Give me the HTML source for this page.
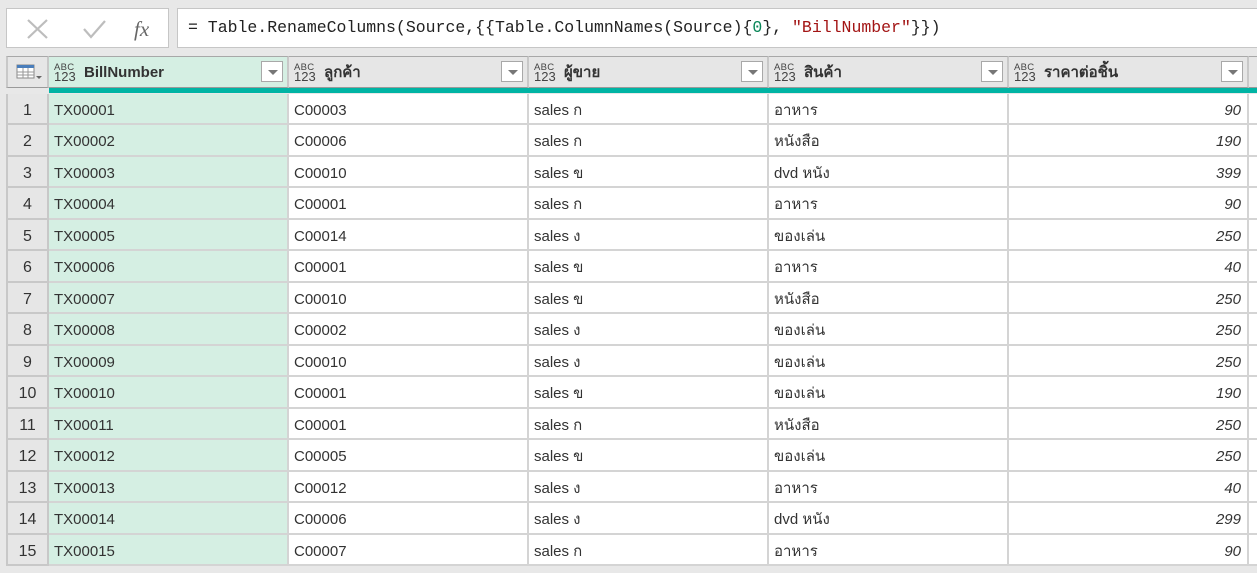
<!DOCTYPE html>
<html><head><meta charset="utf-8"><style>
*{margin:0;padding:0;box-sizing:border-box}
body{width:1257px;height:573px;background:#e8e8e8;position:relative;overflow:hidden;font-family:"Liberation Sans","Noto Sans CJK SC",sans-serif;color:#333}
.fbox{position:absolute;top:8px;height:40px;background:#fff;border:1px solid #c6c6c6}
.grid{position:absolute;left:6px;top:56px;width:1260px}
.hdr{position:absolute;top:0;height:32px;background:#e6e6e6;border-top:1px solid #a8a8a8;border-bottom:1px solid #9a9a9a;border-right:2px solid #c8c8c8}
.hdr.sel{background:#d5efe3}
.lbl{position:absolute;left:5px;top:6px;font-size:13px;line-height:10px;font-family:"Liberation Sans",sans-serif;color:#444}
.lbl b{display:block;font-weight:normal;font-size:9.5px;letter-spacing:.3px;line-height:9px}
.name{position:absolute;left:35px;top:6px;line-height:20px;height:20px;font-weight:bold;font-size:15px;color:#333;font-family:"Liberation Sans","Noto Sans CJK SC",sans-serif}
.dd{position:absolute;right:4px;top:4px;width:22px;height:21px;background:#fff;border:1px solid #a8a8a8}
.dd:after{content:"";position:absolute;left:6px;top:8px;border-left:5px solid transparent;border-right:5px solid transparent;border-top:5px solid #777}
.teal{position:absolute;top:32px;left:43px;height:5px;width:1210px;background:#00b4a4}
.row{position:absolute;left:0;height:31.47px;width:1260px}
.c{position:absolute;top:0;height:100%;border-right:2px solid #d4d4d4;border-bottom:2px solid #d4d4d4;background:#fff;font-size:15px;line-height:29px;padding-top:2px;padding-left:5px;font-family:"Liberation Sans","Noto Sans CJK SC",sans-serif;color:#333}
.n{background:#e6e6e6;text-align:center;padding-left:0;border-left:2px solid #c8c8c8;border-right:2px solid #c8c8c8;border-bottom:2px solid #c8c8c8;font-size:16px}
.g{background:#d5efe3}
.r{text-align:right;padding-right:6px;font-style:italic}
</style></head><body>
<div class="fbox" style="left:6px;width:163px">
<svg width="163" height="40" style="position:absolute;left:0;top:0">
<path d="M21 11 L40 29 M40 11 L21 29" stroke="#bdbdbd" stroke-width="2.2" fill="none"/>
<path d="M77 20 L84 28 L98 12" stroke="#bdbdbd" stroke-width="2.2" fill="none"/>
<text x="127" y="27" font-family="Liberation Serif" font-style="italic" font-size="21" fill="#666">fx</text>
</svg></div>
<div class="fbox" style="left:177px;width:1090px;font-family:'Liberation Mono',monospace;font-size:16.5px;line-height:38px;padding-left:10px;color:#222;white-space:nowrap">= Table.RenameColumns(Source,{{Table.ColumnNames(Source){<span style="color:#098658">0</span>}, <span style="color:#a31515">"BillNumber"</span>}})</div>
<div class="grid">
<div class="hdr" style="left:0;width:43px;border-left:2px solid #c8c8c8">
<svg width="28" height="20" style="position:absolute;left:8px;top:7px"><rect x="1" y="1" width="17" height="13" fill="#fff" stroke="#888"/><rect x="1" y="1" width="17" height="3" fill="#4a7ebb"/><path d="M1 8h17M1 11h17M7 4v10M12 4v10" stroke="#999" stroke-width="1"/><path d="M20 12l3 3 3-3z" fill="#666"/></svg></div>
<div class="hdr sel" style="left:43px;width:240px"><div class="lbl"><b>ABC</b>123</div><div class="name">BillNumber</div><div class="dd"></div></div>
<div class="hdr" style="left:283px;width:240px"><div class="lbl"><b>ABC</b>123</div><div class="name">ลูกค้า</div><div class="dd"></div></div>
<div class="hdr" style="left:523px;width:240px"><div class="lbl"><b>ABC</b>123</div><div class="name">ผู้ขาย</div><div class="dd"></div></div>
<div class="hdr" style="left:763px;width:240px"><div class="lbl"><b>ABC</b>123</div><div class="name">สินค้า</div><div class="dd"></div></div>
<div class="hdr" style="left:1003px;width:240px"><div class="lbl"><b>ABC</b>123</div><div class="name">ราคาต่อชิ้น</div><div class="dd"></div></div>
<div class="hdr" style="left:1243px;width:40px"></div>
<div class="teal"></div>
</div>
<div class="grid" style="top:94px">
<div class="row" style="top:0px"><div class="c n" style="left:0;width:43px">1</div><div class="c g" style="left:43px;width:240px">TX00001</div><div class="c" style="left:283px;width:240px">C00003</div><div class="c" style="left:523px;width:240px">sales ก</div><div class="c" style="left:763px;width:240px">อาหาร</div><div class="c r" style="left:1003px;width:240px">90</div><div class="c" style="left:1243px;width:30px"></div></div>
<div class="row" style="top:31.47px"><div class="c n" style="left:0;width:43px">2</div><div class="c g" style="left:43px;width:240px">TX00002</div><div class="c" style="left:283px;width:240px">C00006</div><div class="c" style="left:523px;width:240px">sales ก</div><div class="c" style="left:763px;width:240px">หนังสือ</div><div class="c r" style="left:1003px;width:240px">190</div><div class="c" style="left:1243px;width:30px"></div></div>
<div class="row" style="top:62.94px"><div class="c n" style="left:0;width:43px">3</div><div class="c g" style="left:43px;width:240px">TX00003</div><div class="c" style="left:283px;width:240px">C00010</div><div class="c" style="left:523px;width:240px">sales ข</div><div class="c" style="left:763px;width:240px">dvd หนัง</div><div class="c r" style="left:1003px;width:240px">399</div><div class="c" style="left:1243px;width:30px"></div></div>
<div class="row" style="top:94.41px"><div class="c n" style="left:0;width:43px">4</div><div class="c g" style="left:43px;width:240px">TX00004</div><div class="c" style="left:283px;width:240px">C00001</div><div class="c" style="left:523px;width:240px">sales ก</div><div class="c" style="left:763px;width:240px">อาหาร</div><div class="c r" style="left:1003px;width:240px">90</div><div class="c" style="left:1243px;width:30px"></div></div>
<div class="row" style="top:125.88px"><div class="c n" style="left:0;width:43px">5</div><div class="c g" style="left:43px;width:240px">TX00005</div><div class="c" style="left:283px;width:240px">C00014</div><div class="c" style="left:523px;width:240px">sales ง</div><div class="c" style="left:763px;width:240px">ของเล่น</div><div class="c r" style="left:1003px;width:240px">250</div><div class="c" style="left:1243px;width:30px"></div></div>
<div class="row" style="top:157.35px"><div class="c n" style="left:0;width:43px">6</div><div class="c g" style="left:43px;width:240px">TX00006</div><div class="c" style="left:283px;width:240px">C00001</div><div class="c" style="left:523px;width:240px">sales ข</div><div class="c" style="left:763px;width:240px">อาหาร</div><div class="c r" style="left:1003px;width:240px">40</div><div class="c" style="left:1243px;width:30px"></div></div>
<div class="row" style="top:188.82px"><div class="c n" style="left:0;width:43px">7</div><div class="c g" style="left:43px;width:240px">TX00007</div><div class="c" style="left:283px;width:240px">C00010</div><div class="c" style="left:523px;width:240px">sales ข</div><div class="c" style="left:763px;width:240px">หนังสือ</div><div class="c r" style="left:1003px;width:240px">250</div><div class="c" style="left:1243px;width:30px"></div></div>
<div class="row" style="top:220.29px"><div class="c n" style="left:0;width:43px">8</div><div class="c g" style="left:43px;width:240px">TX00008</div><div class="c" style="left:283px;width:240px">C00002</div><div class="c" style="left:523px;width:240px">sales ง</div><div class="c" style="left:763px;width:240px">ของเล่น</div><div class="c r" style="left:1003px;width:240px">250</div><div class="c" style="left:1243px;width:30px"></div></div>
<div class="row" style="top:251.76px"><div class="c n" style="left:0;width:43px">9</div><div class="c g" style="left:43px;width:240px">TX00009</div><div class="c" style="left:283px;width:240px">C00010</div><div class="c" style="left:523px;width:240px">sales ง</div><div class="c" style="left:763px;width:240px">ของเล่น</div><div class="c r" style="left:1003px;width:240px">250</div><div class="c" style="left:1243px;width:30px"></div></div>
<div class="row" style="top:283.23px"><div class="c n" style="left:0;width:43px">10</div><div class="c g" style="left:43px;width:240px">TX00010</div><div class="c" style="left:283px;width:240px">C00001</div><div class="c" style="left:523px;width:240px">sales ข</div><div class="c" style="left:763px;width:240px">ของเล่น</div><div class="c r" style="left:1003px;width:240px">190</div><div class="c" style="left:1243px;width:30px"></div></div>
<div class="row" style="top:314.7px"><div class="c n" style="left:0;width:43px">11</div><div class="c g" style="left:43px;width:240px">TX00011</div><div class="c" style="left:283px;width:240px">C00001</div><div class="c" style="left:523px;width:240px">sales ก</div><div class="c" style="left:763px;width:240px">หนังสือ</div><div class="c r" style="left:1003px;width:240px">250</div><div class="c" style="left:1243px;width:30px"></div></div>
<div class="row" style="top:346.17px"><div class="c n" style="left:0;width:43px">12</div><div class="c g" style="left:43px;width:240px">TX00012</div><div class="c" style="left:283px;width:240px">C00005</div><div class="c" style="left:523px;width:240px">sales ข</div><div class="c" style="left:763px;width:240px">ของเล่น</div><div class="c r" style="left:1003px;width:240px">250</div><div class="c" style="left:1243px;width:30px"></div></div>
<div class="row" style="top:377.64px"><div class="c n" style="left:0;width:43px">13</div><div class="c g" style="left:43px;width:240px">TX00013</div><div class="c" style="left:283px;width:240px">C00012</div><div class="c" style="left:523px;width:240px">sales ง</div><div class="c" style="left:763px;width:240px">อาหาร</div><div class="c r" style="left:1003px;width:240px">40</div><div class="c" style="left:1243px;width:30px"></div></div>
<div class="row" style="top:409.11px"><div class="c n" style="left:0;width:43px">14</div><div class="c g" style="left:43px;width:240px">TX00014</div><div class="c" style="left:283px;width:240px">C00006</div><div class="c" style="left:523px;width:240px">sales ง</div><div class="c" style="left:763px;width:240px">dvd หนัง</div><div class="c r" style="left:1003px;width:240px">299</div><div class="c" style="left:1243px;width:30px"></div></div>
<div class="row" style="top:440.58px"><div class="c n" style="left:0;width:43px">15</div><div class="c g" style="left:43px;width:240px">TX00015</div><div class="c" style="left:283px;width:240px">C00007</div><div class="c" style="left:523px;width:240px">sales ก</div><div class="c" style="left:763px;width:240px">อาหาร</div><div class="c r" style="left:1003px;width:240px">90</div><div class="c" style="left:1243px;width:30px"></div></div>
</div>
</body></html>
